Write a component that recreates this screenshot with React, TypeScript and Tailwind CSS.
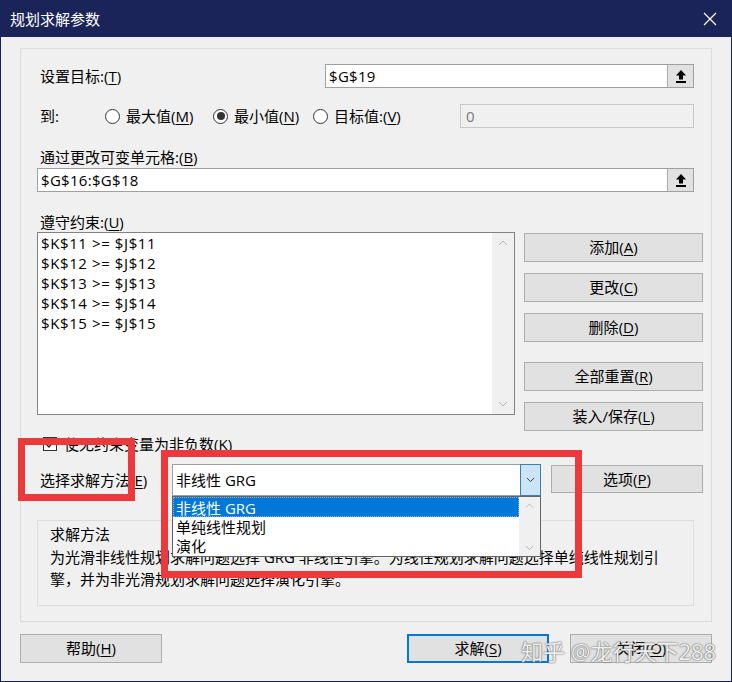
import React from "react";

const FONT = "font-['Open_Sans','Noto_Sans_CJK_SC',sans-serif]";

// label with an underlined access key, e.g. 添加(A)
function Key({ text, k, colon = false }: { text: string; k: string; colon?: boolean }) {
  return (
    <span>
      {text}
      {colon ? ":" : ""}(<span className="underline underline-offset-2">{k}</span>)
    </span>
  );
}

function Btn({ text, k, className = "" }: { text: string; k: string; className?: string }) {
  return (
    <div
      className={`flex items-center justify-center bg-[#e1e1e1] border border-[#adadad] text-[15px] leading-none text-black ${className}`}
    >
      <Key text={text} k={k} />
    </div>
  );
}

function UpArrowIcon() {
  return (
    <svg width="12" height="15" viewBox="0 0 12 15">
      <polygon points="6,1 1,6.5 4,6.5 4,10.5 8,10.5 8,6.5 11,6.5" fill="#000" />
      <rect x="1" y="12" width="10" height="2" fill="#000" />
    </svg>
  );
}

function Chevron({ dir, color = "#b5b5b5", size = 10 }: { dir: "up" | "down"; color?: string; size?: number }) {
  return (
    <svg width={size} height={size / 2 + 1} viewBox="0 0 10 6">
      <polyline
        points={dir === "up" ? "1,5 5,1 9,5" : "1,1 5,5 9,1"}
        fill="none"
        stroke={color}
        strokeWidth="1"
      />
    </svg>
  );
}

function Radio({ checked }: { checked?: boolean }) {
  return (
    <div className="w-[15px] h-[15px] rounded-full border border-[#333] bg-white flex items-center justify-center">
      {checked && <div className="w-[8px] h-[8px] rounded-full bg-[#333]" />}
    </div>
  );
}

function RefInput({ value, className = "" }: { value: string; className?: string }) {
  return (
    <div className={`h-[24px] flex bg-white border border-[#a0a0a0] ${className}`}>
      <div className="flex-1 pl-[3px] text-[15px] leading-[22px] tracking-[0.3px] text-black">{value}</div>
      <div className="w-[26px] h-full bg-[#e1e1e1] border-l border-[#adadad] flex items-center justify-center">
        <UpArrowIcon />
      </div>
    </div>
  );
}

const constraints = ["$K$11 >= $J$11", "$K$12 >= $J$12", "$K$13 >= $J$13", "$K$14 >= $J$14", "$K$15 >= $J$15"];

export default function App() {
  return (
    <div className={`relative w-[732px] h-[682px] bg-[#f0f0f0] border border-[#1b2459] flex flex-col text-black ${FONT}`}>
      {/* title bar */}
      <div className="h-[36px] bg-[#1b2459] flex items-center justify-between pl-[9px] pr-[14px]">
        <span className="text-white text-[15px] leading-none">规划求解参数</span>
        <svg width="14" height="14" viewBox="0 0 14 14">
          <path d="M1 1 L13 13 M13 1 L1 13" stroke="#fff" strokeWidth="1.2" />
        </svg>
      </div>

      {/* main group */}
      <div className="mx-[19px] mt-[11px] h-[574px] border border-[#dcdcdc] pl-[16px] pr-[8px] flex flex-col text-[15px]">
        {/* target */}
        <div className="mt-[15px] h-[24px] flex items-center mr-[9px]">
          <div className="w-[288px] pl-[3px]">
            <Key text="设置目标" k="T" colon />
          </div>
          <RefInput value="$G$19" className="flex-1" />
        </div>

        {/* to */}
        <div className="mt-[16px] h-[24px] flex items-center mr-[9px]">
          <div className="w-[68px] pl-[3px]">到:</div>
          <div className="w-[108px] flex items-center gap-[6px]">
            <Radio />
            <Key text="最大值" k="M" />
          </div>
          <div className="w-[100px] flex items-center gap-[6px]">
            <Radio checked />
            <Key text="最小值" k="N" />
          </div>
          <div className="flex items-center gap-[6px]">
            <Radio />
            <Key text="目标值" k="V" colon />
          </div>
          <div className="ml-auto w-[234px] h-[24px] bg-[#f0f0f0] border border-[#c8c8c8] pl-[5px] text-[#7a7a7a] leading-[22px]">
            0
          </div>
        </div>

        {/* changing cells */}
        <div className="mt-[19px] h-[20px] leading-[20px] pl-[3px]">
          <Key text="通过更改可变单元格" k="B" colon />
        </div>
        <RefInput value="$G$16:$G$18" className="mt-[1px] mr-[9px]" />

        {/* constraints */}
        <div className="mt-[20px] h-[20px] leading-[20px] pl-[3px]">
          <Key text="遵守约束" k="U" colon />
        </div>
        <div className="flex">
          <div className="w-[478px] h-[183px] bg-white border border-[#828282] flex">
            <div className="flex-1 pl-[3px]">
              {constraints.map((c) => (
                <div key={c} className="h-[20px] leading-[20px] tracking-[0.6px]">
                  {c}
                </div>
              ))}
            </div>
            <div className="w-[22px] bg-[#f0f0f0] flex flex-col items-center justify-between py-[7px]">
              <Chevron dir="up" />
              <Chevron dir="down" />
            </div>
          </div>
          <div className="ml-[9px] flex-1 flex flex-col pt-[1px]">
            <Btn text="添加" k="A" className="h-[29px]" />
            <Btn text="更改" k="C" className="h-[29px] mt-[11px]" />
            <Btn text="删除" k="D" className="h-[29px] mt-[11px]" />
            <Btn text="全部重置" k="R" className="h-[29px] mt-[20px]" />
            <Btn text="装入/保存" k="L" className="h-[29px] mt-[11px]" />
          </div>
        </div>

        {/* non-negative */}
        <div className="mt-[3px] h-[20px] flex items-center pl-[6px] gap-[7px]">
          <div className="w-[14px] h-[14px] bg-white border border-[#333] flex items-center justify-center">
            <svg width="10" height="10" viewBox="0 0 10 10">
              <polyline points="1,5 4,8 9,2" fill="none" stroke="#222" strokeWidth="1.3" />
            </svg>
          </div>
          <span className="leading-[20px]">
            使无约束变量为非负数(<span className="underline underline-offset-2">K</span>)
          </span>
        </div>

        {/* solving method */}
        <div className="mt-[10px] h-[32px] flex items-start">
          <div className="w-[135px] pl-[3px] h-[32px] flex items-center">
            选择求解方法(<span className="underline underline-offset-2">E</span>)
          </div>
          <div className="relative w-[369px] h-[32px]">
            <div className="h-full flex bg-white border border-[#a0a0a0]">
              <div className="flex-1 pl-[3px] flex items-center">非线性 GRG</div>
              <div className="w-[21px] -my-px -mr-px bg-[#cce4f7] border border-[#3c7fb1] flex items-center justify-center">
                <Chevron dir="down" color="#333" size={9} />
              </div>
            </div>
            {/* open list */}
            <div className="absolute left-0 top-[32px] z-10 w-[369px] h-[61px] bg-white border border-[#646464] flex">
              <div className="flex-1">
                <div className="h-[20px] leading-[20px] pl-[2px] bg-[#0078d7] text-white border border-dotted border-[#7fb4e6]">
                  非线性 GRG
                </div>
                <div className="h-[20px] leading-[20px] pl-[3px]">单纯线性规划</div>
                <div className="h-[19px] leading-[19px] pl-[3px]">演化</div>
              </div>
              <div className="w-[21px] bg-[#f0f0f0] flex flex-col items-center justify-between py-[6px]">
                <Chevron dir="up" size={9} />
                <Chevron dir="down" size={9} />
              </div>
            </div>
          </div>
          <Btn text="选项" k="P" className="ml-[10px] mt-[1px] flex-1 h-[28px]" />
        </div>

        {/* description */}
        <div className="mt-[24px] h-[86px] mr-[9px] border border-[#dcdcdc] pl-[12px] pt-[3px]">
          <div className="h-[20px] leading-[20px]">求解方法</div>
          <p className="leading-[22px] mt-[2px]">
            为光滑非线性规划求解问题选择 GRG 非线性引擎。为线性规划求解问题选择单纯线性规划引
            <br />
            擎，并为非光滑规划求解问题选择演化引擎。
          </p>
        </div>
      </div>

      {/* bottom buttons */}
      <div className="mt-[12px] mx-[19px] flex">
        <Btn text="帮助" k="H" className="w-[142px] h-[29px]" />
        <Btn text="求解" k="S" className="ml-auto w-[142px] h-[29px] !border-2 !border-[#0078d7]" />
        <Btn text="关闭" k="O" className="ml-[21px] w-[142px] h-[29px]" />
      </div>

      {/* annotations */}
      <div className="absolute left-[17px] top-[437px] w-[117px] h-[63px] border-[7px] border-[#ec3a3c] z-20" />
      <div className="absolute left-[160px] top-[449px] w-[421px] h-[128px] border-[7px] border-[#ec3a3c] z-20" />

      {/* watermark */}
      <div className="absolute left-[520px] top-[636px] z-30 text-[22px] leading-[28px] text-white/90 [text-shadow:0_0_1px_#555,0_0_2px_#777] whitespace-nowrap">
        知乎 @龙行天下288
      </div>
    </div>
  );
}
